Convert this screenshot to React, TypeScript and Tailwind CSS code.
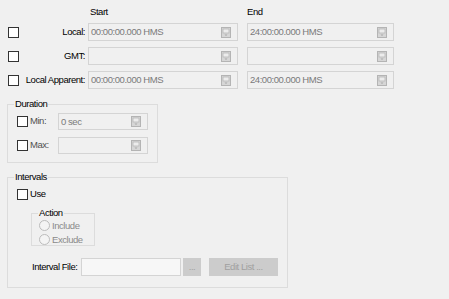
import React from "react";

const font = { fontFamily: '"Liberation Sans", Arial, sans-serif' };

function DropIcon() {
  return (
    <svg width="10" height="11" viewBox="0 0 10 11" className="shrink-0">
      <rect x="0.5" y="0.5" width="9" height="10" fill="#d6d6d6" stroke="#b4b4b4" />
      <rect x="2" y="2" width="6" height="4" fill="#ececec" stroke="#b8b8b8" strokeWidth="0.8" />
      <path d="M3.5 7.5 L6.5 7.5 L5 9 Z" fill="#a8a8a8" />
    </svg>
  );
}

function Field({ value, w, h = 18 }: { value?: string; w: number; h?: number }) {
  return (
    <div
      className="flex items-center justify-between border border-[#d4d4d4] bg-[#f0f0f0] pl-[2px] pr-[6px] text-[#7a7a7a]"
      style={{ width: w, height: h }}
    >
      <span className="leading-none">{value ?? ""}</span>
      <DropIcon />
    </div>
  );
}

function Check() {
  return <div className="h-[11px] w-[11px] shrink-0 border border-[#333333] bg-white" />;
}

function Radio() {
  return <div className="h-[11px] w-[11px] shrink-0 rounded-full border border-[#bcbcbc] bg-[#f4f4f4]" />;
}

function TopRow({ label, start, end }: { label: string; start?: string; end?: string }) {
  return (
    <div className="flex h-[18px] items-center">
      <div className="pl-[8px]">
        <Check />
      </div>
      <div className="w-[66px] text-right text-black">{label}</div>
      <div className="ml-[3px]">
        <Field value={start} w={150} />
      </div>
      <div className="ml-[9px]">
        <Field value={end} w={147} />
      </div>
    </div>
  );
}

export default function App() {
  return (
    <div
      className="h-[299px] w-[449px] overflow-hidden bg-[#f0f0f0] text-[9.5px] tracking-[-0.45px] text-black"
      style={font}
    >
      <div className="flex h-[23px] items-center pt-[1px]">
        <div className="w-[90px]" />
        <div className="w-[157px]">Start</div>
        <div>End</div>
      </div>
      <div className="flex flex-col gap-[6px]">
        <TopRow label="Local:" start="00:00:00.000 HMS" end="24:00:00.000 HMS" />
        <TopRow label="GMT:" />
        <TopRow label="Local Apparent:" start="00:00:00.000 HMS" end="24:00:00.000 HMS" />
      </div>

      <fieldset className="ml-[7px] mt-[9px] h-[65px] w-[151px] border border-[#dcdcdc]">
        <legend className="ml-[6px] px-[1px] leading-[12px]">Duration</legend>
        <div className="flex flex-col gap-[7px] pt-[3px]">
          <div className="flex h-[17px] items-center">
            <div className="ml-[9px]">
              <Check />
            </div>
            <span className="ml-[2px] w-[28px] text-[#505050]">Min:</span>
            <Field value="0 sec" w={90} h={17} />
          </div>
          <div className="flex h-[17px] items-center">
            <div className="ml-[9px]">
              <Check />
            </div>
            <span className="ml-[2px] w-[28px] text-[#505050]">Max:</span>
            <Field w={90} h={17} />
          </div>
        </div>
      </fieldset>

      <fieldset className="ml-[7px] mt-[8px] h-[117px] w-[281px] border border-[#dcdcdc]">
        <legend className="ml-[6px] px-[1px] leading-[12px]">Intervals</legend>
        <div className="flex items-center pt-[4px]">
          <div className="ml-[9px]">
            <Check />
          </div>
          <span className="ml-[2px]">Use</span>
        </div>
        <fieldset className="ml-[23px] mt-[6px] h-[39px] w-[64px] border border-[#dcdcdc]">
          <legend className="ml-[6px] px-[1px] leading-[12px]">Action</legend>
          <div className="flex flex-col gap-[3px] pl-[7px] pt-[1px] text-[#8a8a8a]">
            <div className="flex h-[11px] items-center gap-[2px] leading-none">
              <Radio />
              <span>Include</span>
            </div>
            <div className="flex h-[11px] items-center gap-[2px] leading-none">
              <Radio />
              <span>Exclude</span>
            </div>
          </div>
        </fieldset>
        <div className="mt-[12px] flex h-[18px] items-center">
          <span className="ml-[24px] w-[49px]">Interval File:</span>
          <div className="h-[18px] w-[100px] border border-[#d4d4d4] bg-[#f7f7f7]" />
          <div className="ml-[2px] flex h-[18px] w-[18px] items-center justify-center bg-[#cccccc] text-[#a0a0a0]">
            ...
          </div>
          <div className="ml-[8px] flex h-[18px] w-[69px] items-center justify-center bg-[#cccccc] text-[#a0a0a0]">
            Edit List ...
          </div>
        </div>
      </fieldset>
    </div>
  );
}
